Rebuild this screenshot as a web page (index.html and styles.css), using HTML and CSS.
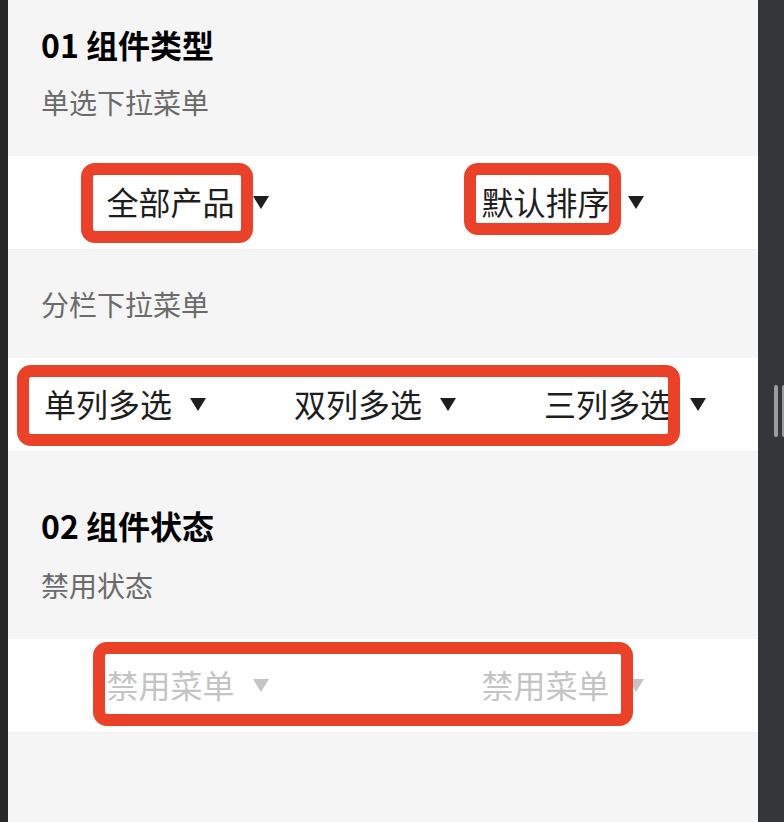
FILE: index.html
```html
<!DOCTYPE html>
<html lang="zh-CN">
<head>
<meta charset="utf-8">
<title>Dropdown Menu</title>
<link rel="stylesheet" href="styles.css">
</head>
<body>
<div class="frame">
  <div class="edge-left"></div>
  <main class="page">
    <section class="group">
      <h2 class="group-title">01 组件类型</h2>
      <p class="group-sub">单选下拉菜单</p>
      <div class="menu-bar menu-bar--two">
        <div class="menu-item"><span class="menu-label">全部产品</span><span class="caret"></span></div>
        <div class="menu-item"><span class="menu-label">默认排序</span><span class="caret"></span></div>
        <div class="mark mark-a"></div>
        <div class="mark mark-b"></div>
      </div>
      <p class="group-sub">分栏下拉菜单</p>
      <div class="menu-bar menu-bar--three">
        <div class="menu-item"><span class="menu-label">单列多选</span><span class="caret"></span></div>
        <div class="menu-item"><span class="menu-label">双列多选</span><span class="caret"></span></div>
        <div class="menu-item"><span class="menu-label">三列多选</span><span class="caret"></span></div>
        <div class="mark mark-c"></div>
      </div>
    </section>
    <section class="group group--second">
      <h2 class="group-title">02 组件状态</h2>
      <p class="group-sub">禁用状态</p>
      <div class="menu-bar menu-bar--two is-disabled">
        <div class="menu-item"><span class="menu-label">禁用菜单</span><span class="caret"></span></div>
        <div class="menu-item"><span class="menu-label">禁用菜单</span><span class="caret"></span></div>
        <div class="mark mark-d"></div>
      </div>
    </section>
  </main>
  <div class="edge-right">
    <div class="scroll-grip">
      <span class="grip-line"></span>
      <span class="grip-line"></span>
    </div>
  </div>
</div>
</body>
</html>
```

FILE: styles.css
```css
* {
  box-sizing: border-box;
}

html,
body {
  margin: 0;
  padding: 0;
  height: 100%;
}

body {
  font-family: "Noto Sans CJK SC", "Noto Sans", sans-serif;
  background: #f5f5f5;
}

.frame {
  display: flex;
  width: 784px;
  height: 822px;
  overflow: hidden;
}

.edge-left {
  width: 8px;
  flex: none;
  background: #262626;
}

.page {
  width: 750px;
  flex: none;
  background: #f5f5f5;
}

.edge-right {
  flex: 1;
  background: #35363a;
  display: flex;
  justify-content: flex-end;
  padding-top: 385px;
}

.scroll-grip {
  display: flex;
  gap: 4px;
  height: 52px;
  margin-right: -2px;
}

.grip-line {
  width: 4px;
  height: 52px;
  border-radius: 2px;
  background: #9d9d9f;
}

.group-title {
  margin: 0;
  padding: 22px 0 0 33px;
  font-size: 32px;
  line-height: 44px;
  font-weight: 700;
  color: #000;
}

.group-sub {
  margin: 16px 0 0;
  padding-left: 33px;
  font-size: 28px;
  line-height: 40px;
  color: #6b6b6b;
}

.menu-bar {
  position: relative;
  display: flex;
  height: 94px;
  margin-top: 34px;
  background: #fff;
  border-bottom: 1px solid #efefef;
}

.menu-bar + .group-sub {
  margin-top: 34px;
}

.group--second {
  margin-top: 29px;
}

.group--second .group-sub {
  margin-top: 18px;
}

.menu-item {
  flex: 1;
  display: flex;
  align-items: center;
  justify-content: center;
  padding-right: 16px;
}

.menu-label {
  font-size: 32px;
  line-height: 44px;
  padding-bottom: 4px;
  color: #1e1e1e;
  white-space: nowrap;
}

.caret {
  width: 0;
  height: 0;
  margin-left: 18px;
  border-left: 8px solid transparent;
  border-right: 8px solid transparent;
  border-top: 13px solid #1e1e1e;
}

.is-disabled .menu-label {
  color: #c4c4c4;
}

.is-disabled .caret {
  border-top-color: #c4c4c4;
}

.mark {
  position: absolute;
  border: 12px solid #ea4128;
  border-radius: 14px;
  pointer-events: none;
}

.mark-a {
  left: 73px;
  top: 7px;
  width: 172px;
  height: 80px;
}

.mark-b {
  left: 456px;
  top: 7px;
  width: 157px;
  height: 72px;
}

.mark-c {
  left: 9px;
  top: 7px;
  width: 663px;
  height: 81px;
}

.mark-d {
  left: 85px;
  top: 3px;
  width: 540px;
  height: 84px;
}
```
